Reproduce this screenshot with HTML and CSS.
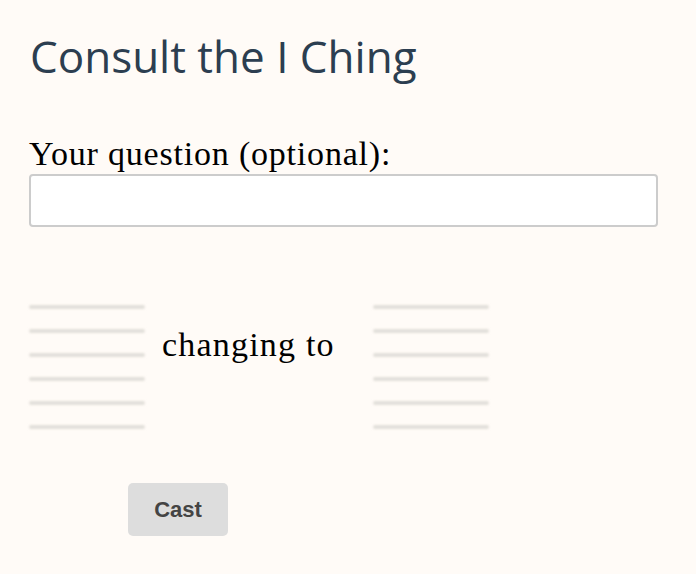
FILE: index.html
```html
<!DOCTYPE html>
<html lang="en">

<head>
    <meta charset="utf-8">
    <meta name="viewport" content="width=device-width, initial-scale=1.0">
    <title>Consult the I Ching</title>
    <link rel="stylesheet" href="styles.css">
</head>

<body>

    <h1>Consult the I Ching</h1>

    <form id="spoerg">
        <label for="question">Your question (optional):</label>
        <input type="text" id="question" name="question">

        <section class="kast">
            <div class="hexagram">
                <span class="linje"></span>
                <span class="linje"></span>
                <span class="linje"></span>
                <span class="linje"></span>
                <span class="linje"></span>
                <span class="linje"></span>
            </div>

            <p class="changing">changing to</p>

            <div class="hexagram">
                <span class="linje"></span>
                <span class="linje"></span>
                <span class="linje"></span>
                <span class="linje"></span>
                <span class="linje"></span>
                <span class="linje"></span>
            </div>
        </section>

        <button type="button" class="cast">Cast</button>
    </form>

</body>

</html>
```

FILE: styles.css
```css
body {
    background-color: #fffbf7;
    margin: 0;
    padding: 0 38px 0 29px;
    font-family: "Liberation Serif", serif;
    color: #000;
}

h1 {
    font-family: "Open Sans", sans-serif;
    font-weight: 400;
    font-size: 44px;
    color: #2c3e50;
    margin: 26px 0 0 1px;
    line-height: 60px;
}

label {
    display: block;
    font-size: 34px;
    letter-spacing: 0.8px;
    line-height: 40px;
    margin-top: 48px;
}

input {
    display: block;
    box-sizing: border-box;
    width: 100%;
    height: 53px;
    border: solid #cccccc 2px;
    border-radius: 4px;
    background-color: white;
    margin: 0;
}

.kast {
    display: flex;
    align-items: flex-start;
    margin-top: 76px;
}

.hexagram {
    display: flex;
    flex-direction: column;
    gap: 20px;
    width: 116px;
    padding-top: 2px;
}

.linje {
    display: block;
    height: 4px;
    border-radius: 2px;
    background-color: #e3e0db;
    filter: blur(0.8px);
}

.changing {
    font-size: 34px;
    letter-spacing: 1.2px;
    margin: 22px 38px 0 17px;
    line-height: 40px;
}

/*  knap  */
.cast {
    display: block;
    margin: 54px 0 0 99px;
    width: 100px;
    height: 53px;
    border: none;
    border-radius: 5px;
    background-color: #dddddd;
    color: #444444;
    font-family: "Liberation Sans", sans-serif;
    font-weight: bold;
    font-size: 22px;
}
```
